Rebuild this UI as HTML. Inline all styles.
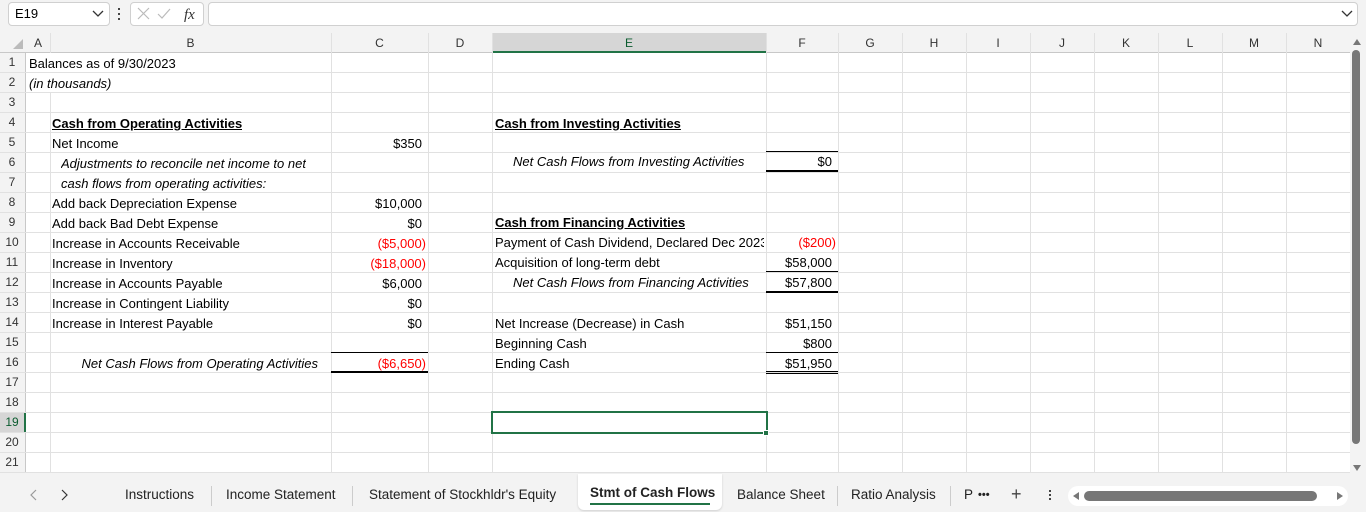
<!DOCTYPE html>
<html><head><meta charset="utf-8"><style>
*{margin:0;padding:0;box-sizing:border-box}
body{width:1366px;height:512px;overflow:hidden;background:#fff;font-family:"Liberation Sans",sans-serif;font-size:13px;color:#000;position:relative}
.a{position:absolute}
.t{position:absolute;white-space:nowrap;line-height:20px;height:20px;overflow:hidden;margin-top:1px}
.r{text-align:right}
.i{font-style:italic}
.b{font-weight:bold;text-decoration:underline}
.red{color:#f00}
.hl{position:absolute;height:1px;background:#e1e1e1}
.vl{position:absolute;width:1px;background:#e1e1e1}
.ch{position:absolute;top:33px;height:20px;line-height:20px;text-align:center;font-size:12px;color:#333}
.rh{position:absolute;left:0;width:24px;height:20px;line-height:20px;text-align:center;font-size:12px;color:#333}
.tab{position:absolute;top:487px;font-size:13.5px;color:#222}
.sep{position:absolute;top:486px;width:1px;height:20px;background:#ccc}
</style></head><body>
<div class="a" style="left:0;top:0;width:1366px;height:33px;background:#f3f3f3"></div>
<div class="a" style="left:8px;top:2px;width:102px;height:24px;background:#fff;border:1px solid #d0d0d0;border-radius:4px"></div>
<div class="t" style="left:15px;top:3px;font-size:13px">E19</div>
<svg class="a" style="left:92px;top:10px" width="12" height="8"><path d="M1 1l5 5 5-5" fill="none" stroke="#333" stroke-width="1.3"/></svg>
<div class="a" style="left:118px;top:8px;width:2px;height:2px;background:#444;box-shadow:0 5px 0 #444,0 10px 0 #444"></div>
<div class="a" style="left:130px;top:2px;width:74px;height:24px;background:#fff;border:1px solid #d0d0d0;border-radius:4px"></div>
<svg class="a" style="left:136px;top:6px" width="66" height="16"><path d="M2 2l11 11M13 2L2 13" stroke="#bbb" stroke-width="1.2"/><path d="M22 8l4 4 8-9" fill="none" stroke="#bbb" stroke-width="1.2"/><text x="48" y="13" font-family="Liberation Serif" font-style="italic" font-size="15" fill="#333">fx</text></svg>
<div class="a" style="left:208px;top:2px;width:1150px;height:24px;background:#fff;border:1px solid #d0d0d0;border-radius:4px"></div>
<svg class="a" style="left:1341px;top:10px" width="12" height="8"><path d="M1 1l5 5 5-5" fill="none" stroke="#333" stroke-width="1.3"/></svg>
<div class="a" style="left:0;top:33px;width:1350px;height:20px;background:#f3f3f3;border-bottom:1px solid #c8c8c8"></div>
<div class="a" style="left:0;top:53px;width:26px;height:420px;background:#f3f3f3;border-right:1px solid #c8c8c8"></div>
<div class="a" style="left:492px;top:33px;width:274px;height:20px;background:#d6d6d6;border-bottom:2px solid #217346"></div>
<div class="a" style="left:0;top:412px;width:26px;height:20px;background:#d6d6d6;border-right:2px solid #217346"></div>
<svg class="a" style="left:12px;top:38px" width="12" height="12"><path d="M11 1V11H1Z" fill="#bbb"/></svg>
<div class="ch" style="left:26px;width:24px">A</div>
<div class="ch" style="left:50px;width:281px">B</div>
<div class="ch" style="left:331px;width:97px">C</div>
<div class="ch" style="left:428px;width:64px">D</div>
<div class="ch" style="left:492px;width:274px;color:#0b5c2f">E</div>
<div class="ch" style="left:766px;width:72px">F</div>
<div class="ch" style="left:838px;width:64px">G</div>
<div class="ch" style="left:902px;width:64px">H</div>
<div class="ch" style="left:966px;width:64px">I</div>
<div class="ch" style="left:1030px;width:64px">J</div>
<div class="ch" style="left:1094px;width:64px">K</div>
<div class="ch" style="left:1158px;width:64px">L</div>
<div class="ch" style="left:1222px;width:64px">M</div>
<div class="ch" style="left:1286px;width:64px">N</div>
<div class="vl" style="left:50px;top:33px;height:440px"></div>
<div class="vl" style="left:331px;top:33px;height:440px"></div>
<div class="vl" style="left:428px;top:33px;height:440px"></div>
<div class="vl" style="left:492px;top:33px;height:440px"></div>
<div class="vl" style="left:766px;top:33px;height:440px"></div>
<div class="vl" style="left:838px;top:33px;height:440px"></div>
<div class="vl" style="left:902px;top:33px;height:440px"></div>
<div class="vl" style="left:966px;top:33px;height:440px"></div>
<div class="vl" style="left:1030px;top:33px;height:440px"></div>
<div class="vl" style="left:1094px;top:33px;height:440px"></div>
<div class="vl" style="left:1158px;top:33px;height:440px"></div>
<div class="vl" style="left:1222px;top:33px;height:440px"></div>
<div class="vl" style="left:1286px;top:33px;height:440px"></div>
<div class="vl" style="left:1350px;top:33px;height:440px"></div>
<div class="a" style="left:50px;top:53px;width:1px;height:39px;background:#fff"></div>
<div id="rows"></div>
<script>
var h='';for(var n=1;n<=21;n++){var y=52+n*20;h+='<div class="hl" style="left:0;top:'+y+'px;width:1350px"></div><div class="rh" style="top:'+(y-20)+'px;'+(n==19?'color:#0b5c2f':'')+'">'+n+'</div>';}
document.getElementById('rows').innerHTML=h;
</script>
<div class="t" style="left:29px;top:53px">Balances as of 9/30/2023</div>
<div class="t i" style="left:29px;top:73px">(in thousands)</div>
<div class="t b" style="left:52px;top:113px">Cash from Operating Activities</div>
<div class="t" style="left:52px;top:133px">Net Income</div>
<div class="t i" style="left:61px;top:153px">Adjustments to reconcile net income to net</div>
<div class="t i" style="left:61px;top:173px">cash flows from operating activities:</div>
<div class="t" style="left:52px;top:193px">Add back Depreciation Expense</div>
<div class="t" style="left:52px;top:213px">Add back Bad Debt Expense</div>
<div class="t" style="left:52px;top:233px">Increase in Accounts Receivable</div>
<div class="t" style="left:52px;top:253px">Increase in Inventory</div>
<div class="t" style="left:52px;top:273px">Increase in Accounts Payable</div>
<div class="t" style="left:52px;top:293px">Increase in Contingent Liability</div>
<div class="t" style="left:52px;top:313px">Increase in Interest Payable</div>
<div class="t i r" style="left:52px;top:353px;width:266px">Net Cash Flows from Operating Activities</div>
<div class="t r" style="left:331px;top:133px;width:91px">$350</div>
<div class="t r" style="left:331px;top:193px;width:91px">$10,000</div>
<div class="t r" style="left:331px;top:213px;width:91px">$0</div>
<div class="t r red" style="left:331px;top:233px;width:95px">($5,000)</div>
<div class="t r red" style="left:331px;top:253px;width:95px">($18,000)</div>
<div class="t r" style="left:331px;top:273px;width:91px">$6,000</div>
<div class="t r" style="left:331px;top:293px;width:91px">$0</div>
<div class="t r" style="left:331px;top:313px;width:91px">$0</div>
<div class="t r red" style="left:331px;top:353px;width:95px">($6,650)</div>
<div class="a" style="left:331px;top:352px;width:97px;height:1px;background:#000"></div>
<div class="a" style="left:331px;top:371px;width:97px;height:2px;background:#000"></div>
<div class="t b" style="left:495px;top:113px">Cash from Investing Activities</div>
<div class="t i" style="left:513px;top:151px">Net Cash Flows from Investing Activities</div>
<div class="t r" style="left:766px;top:151px;width:66px">$0</div>
<div class="a" style="left:766px;top:151px;width:72px;height:1px;background:#000"></div>
<div class="a" style="left:766px;top:170px;width:72px;height:2px;background:#000"></div>
<div class="t b" style="left:495px;top:212px">Cash from Financing Activities</div>
<div class="t" style="left:495px;top:232px;width:269px">Payment of Cash Dividend, Declared Dec 2023</div>
<div class="t r red" style="left:766px;top:232px;width:70px">($200)</div>
<div class="t" style="left:495px;top:252px">Acquisition of long-term debt</div>
<div class="t r" style="left:766px;top:252px;width:66px">$58,000</div>
<div class="a" style="left:766px;top:271px;width:72px;height:1px;background:#000"></div>
<div class="t i" style="left:513px;top:272px">Net Cash Flows from Financing Activities</div>
<div class="t r" style="left:766px;top:272px;width:66px">$57,800</div>
<div class="a" style="left:766px;top:291px;width:72px;height:2px;background:#000"></div>
<div class="t" style="left:495px;top:313px">Net Increase (Decrease) in Cash</div>
<div class="t r" style="left:766px;top:313px;width:66px">$51,150</div>
<div class="t" style="left:495px;top:333px">Beginning Cash</div>
<div class="t r" style="left:766px;top:333px;width:66px">$800</div>
<div class="a" style="left:766px;top:352px;width:72px;height:1px;background:#000"></div>
<div class="t" style="left:495px;top:353px">Ending Cash</div>
<div class="t r" style="left:766px;top:353px;width:66px">$51,950</div>
<div class="a" style="left:766px;top:371px;width:72px;height:3px;border-top:1px solid #000;border-bottom:1px solid #000"></div>
<div class="a" style="left:491px;top:411px;width:277px;height:23px;border:2px solid #217346"></div>
<div class="a" style="left:763px;top:430px;width:6px;height:6px;background:#217346;border:1px solid #fff"></div>
<div class="a" style="left:1350px;top:33px;width:16px;height:440px;background:#f3f3f3"></div>
<svg class="a" style="left:1352px;top:38px" width="10" height="8"><path d="M1 7L5 1 9 7Z" fill="#777"/></svg>
<div class="a" style="left:1352px;top:50px;width:8px;height:394px;background:#777;border-radius:4px"></div>
<svg class="a" style="left:1352px;top:464px" width="10" height="8"><path d="M1 1L5 7 9 1Z" fill="#777"/></svg>
<div class="a" style="left:0;top:473px;width:1366px;height:39px;background:#f3f3f3"></div>
<svg class="a" style="left:30px;top:489px" width="40" height="12"><path d="M6 1L1 6l5 5" fill="none" stroke="#999" stroke-width="1.2"/><path d="M32 1l5 5-5 5" fill="none" stroke="#333" stroke-width="1.2"/></svg>
<div class="tab" style="left:125px">Instructions</div>
<div class="sep" style="left:211px"></div>
<div class="tab" style="left:226px">Income Statement</div>
<div class="sep" style="left:352px"></div>
<div class="tab" style="left:369px">Statement of Stockhldr's Equity</div>
<div class="a" style="left:578px;top:474px;width:144px;height:36px;background:#fff;border-radius:0 0 6px 6px;box-shadow:0 1px 2px rgba(0,0,0,.15)"></div>
<div class="tab" style="left:590px;top:485px;font-weight:bold">Stmt of Cash Flows</div>
<div class="a" style="left:590px;top:503px;width:120px;height:2px;background:#217346"></div>
<div class="tab" style="left:737px">Balance Sheet</div>
<div class="sep" style="left:837px"></div>
<div class="tab" style="left:851px">Ratio Analysis</div>
<div class="sep" style="left:950px"></div>
<div class="tab" style="left:964px">P</div>
<div class="tab" style="left:978px;top:489px;font-weight:bold;font-size:11px">•••</div>
<div class="tab" style="left:1011px;top:484px;font-size:18px;color:#444">+</div>
<div class="a" style="left:1049px;top:490px;width:2px;height:2px;background:#444;box-shadow:0 4px 0 #444,0 8px 0 #444"></div>
<div class="a" style="left:1068px;top:486px;width:280px;height:20px;background:#fff;border-radius:10px"></div>
<svg class="a" style="left:1072px;top:491px" width="8" height="10"><path d="M7 1L1 5l6 4Z" fill="#777"/></svg>
<div class="a" style="left:1084px;top:491px;width:233px;height:10px;background:#777;border-radius:5px"></div>
<svg class="a" style="left:1336px;top:491px" width="8" height="10"><path d="M1 1l6 4-6 4Z" fill="#777"/></svg>
</body></html>
